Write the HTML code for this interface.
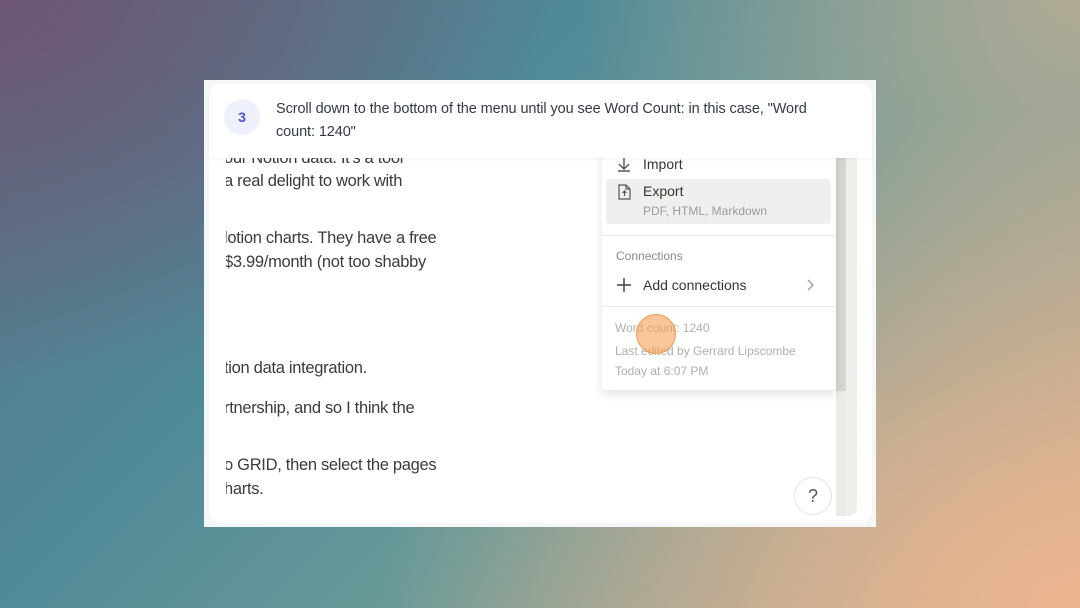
<!DOCTYPE html>
<html><head><meta charset="utf-8"><style>
*{margin:0;padding:0;box-sizing:border-box}
body{width:1080px;height:608px;overflow:hidden;position:relative;font-family:"Liberation Sans",sans-serif;
background:
radial-gradient(ellipse 700px 500px at 1080px 608px,#ecb58f 0%,rgba(236,181,143,0) 100%),
radial-gradient(ellipse 550px 380px at 0 0,#6d5674 0%,rgba(109,86,116,0) 100%),
radial-gradient(ellipse 500px 400px at 1080px 0,#b0aa95 0%,rgba(176,170,149,0) 100%),
linear-gradient(135deg,#5a6f86 0%,#4f8a98 35%,#6a9a98 60%,#c8b094 100%);}
.card{position:absolute;left:204px;top:80px;width:672px;height:447px;background:#f4f6f8;}
.inner{position:absolute;left:5px;top:4px;width:663px;height:439px;background:#fff;border-radius:12px;}
.head{position:absolute;left:0;top:0;width:663px;height:74px;background:#fff;border-radius:12px 12px 0 0;box-shadow:0 2px 3px rgba(0,0,0,.04);z-index:3}
.num{position:absolute;left:15px;top:15px;width:36px;height:36px;border-radius:50%;background:#eef0fb;color:#4a55d6;font-size:14px;font-weight:bold;text-align:center;line-height:36px}
.ht{position:absolute;left:67px;top:14px;width:566px;font-size:14.5px;line-height:23px;color:#333a44;letter-spacing:-0.1px}
.shot{position:absolute;left:17px;top:73px;width:631px;height:359px;background:#fff;overflow:hidden;border-radius:0 0 8px 0}
.t{position:absolute;left:-2px;font-size:16.5px;color:#3b3b3b;white-space:nowrap;letter-spacing:-0.3px}
.sb1{position:absolute;left:610px;top:0;width:10px;height:234px;background:#d9d7d1}
.sb2{position:absolute;left:610px;top:234px;width:10px;height:125px;background:#eceae6}
.sb3{position:absolute;left:620px;top:0;width:11px;height:359px;background:#efeeea}
.menu{position:absolute;left:376px;top:-10px;width:234px;height:243px;background:#fff;box-shadow:0 4px 10px rgba(0,0,0,.12);border-radius:0 0 4px 4px}
.mi{position:absolute;font-size:14px;color:#37352f}
.sm{position:absolute;font-size:12px;color:#9b9a97}
.hl{position:absolute;left:4px;top:32px;width:225px;height:45px;background:#efefee;border-radius:4px}
.sep{position:absolute;left:0;width:234px;height:1px;background:#e9e9e7}
.dot{position:absolute;width:40px;height:40px;border-radius:50%;background:rgba(245,160,90,.6);border:1.5px solid #f29a4e;z-index:5}
.q{position:absolute;left:568px;top:320px;width:38px;height:38px;border-radius:50%;border:1px solid #e3e3e0;background:#fff;text-align:center;line-height:36px;font-size:18px;color:#555}
</style></head><body>
<div class="card"><div class="inner">
<div class="head"><div class="num">3</div><div class="ht">Scroll down to the bottom of the menu until you see Word Count: in this case, "Word<br>count: 1240"</div></div>
<div class="shot">
<div class="t" style="top:-8px">our Notion data. It's a tool</div>
<div class="t" style="top:15px">a real delight to work with</div>
<div class="t" style="top:72px">lotion charts. They have a free</div>
<div class="t" style="top:96px">$3.99/month (not too shabby</div>
<div class="t" style="top:202px">tion data integration.</div>
<div class="t" style="top:242px">rtnership, and so I think the</div>
<div class="t" style="top:299px">o GRID, then select the pages</div>
<div class="t" style="top:323px">harts.</div>
<div class="sb3"></div><div class="sb1"></div><div class="sb2"></div>
<div class="menu">
<svg style="position:absolute;left:14px;top:9px" width="16" height="16" viewBox="0 0 16 16" fill="none" stroke="#555" stroke-width="1.4"><path d="M8 1v12M3 8l5 5 5-5M2 15h12"/></svg>
<div class="mi" style="left:41px;top:9px">Import</div>
<div class="hl"></div>
<svg style="position:absolute;left:16px;top:37px" width="13" height="16" viewBox="0 0 13 16" fill="none" stroke="#555" stroke-width="1.2"><path d="M1 1h7l4 4v10H1z M8 1v4h4 M6.5 12V7M4.5 9l2-2 2 2"/></svg>
<div class="mi" style="left:41px;top:36px">Export</div>
<div class="sm" style="left:41px;top:57px">PDF, HTML, Markdown</div>
<div class="sep" style="top:88px"></div>
<div class="sm" style="left:14px;top:102px;color:#8a8985">Connections</div>
<svg style="position:absolute;left:14px;top:130px" width="16" height="16" viewBox="0 0 16 16" stroke="#444" stroke-width="1.5"><path d="M8 1v14M1 8h14"/></svg>
<div class="mi" style="left:41px;top:130px">Add connections</div>
<svg style="position:absolute;left:204px;top:132px" width="8" height="12" viewBox="0 0 8 12" fill="none" stroke="#999" stroke-width="1.3"><path d="M2 1l5 5-5 5"/></svg>
<div class="sep" style="top:159px"></div>
<div class="sm" style="left:13px;top:174px;color:#b0afab">Word count: 1240</div>
<div class="sm" style="left:13px;top:197px;color:#b0afab">Last edited by Gerrard Lipscombe</div>
<div class="sm" style="left:13px;top:217px;color:#b0afab">Today at 6:07 PM</div>
</div>
<div class="q">?</div>
</div>
<div class="dot" style="left:427px;top:230px"></div>
</div></div>
</body></html>
